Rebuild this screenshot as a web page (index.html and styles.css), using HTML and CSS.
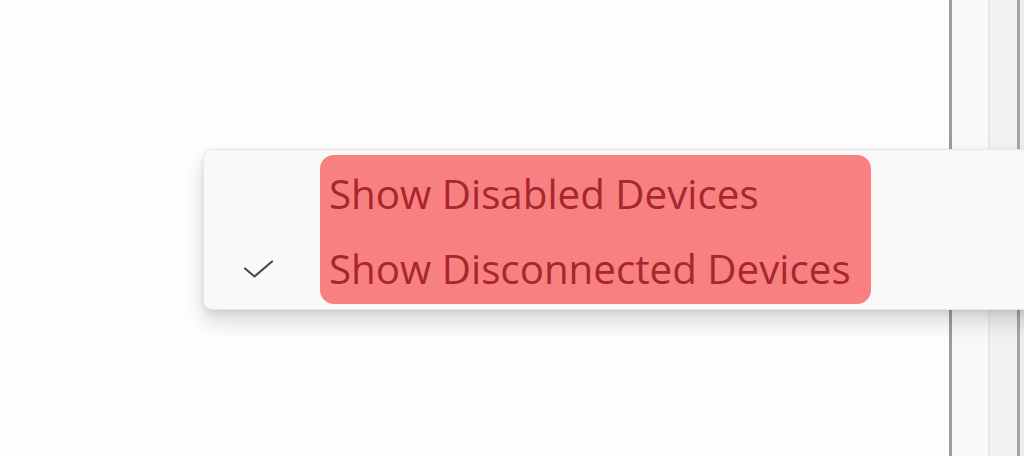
FILE: index.html
```html
<!DOCTYPE html>
<html lang="en">
<head>
<meta charset="utf-8">
<link rel="stylesheet" href="styles.css">
</head>
<body>
<div class="page">
  <div class="main"></div>
  <div class="rail">
    <div class="rail-a"></div>
    <div class="rail-b"></div>
    <div class="rail-c"></div>
  </div>
  <div class="menu">
    <div class="icons">
      <div class="icon-row"></div>
      <div class="icon-row">
        <svg class="check" width="32" height="20" viewBox="0 0 32 20"><path d="M2 9.5 L11.5 17.5 L29 2.5" fill="none" stroke="#4a4a4a" stroke-width="2.2" stroke-linecap="round" stroke-linejoin="round"/></svg>
      </div>
    </div>
    <div class="labels">
      <div class="label">Show Disabled Devices</div>
      <div class="label">Show Disconnected Devices</div>
    </div>
  </div>
</div>
</body>
</html>
```

FILE: styles.css
```css
html, body {
  margin: 0;
  padding: 0;
  background: #ffffff;
}
.page {
  position: relative;
  display: flex;
  width: 1024px;
  height: 456px;
  overflow: hidden;
  font-family: "Open Sans", "Noto Sans", sans-serif;
}
.main {
  flex: 1;
  background: #fefefe;
}
.rail {
  display: flex;
  box-sizing: border-box;
  width: 75px;
  border-left: 3px solid #9c9c9c;
  background: #f4f4f4;
}
.rail-a {
  width: 36px;
  background: #f9f9f9;
  border-right: 2px solid #e8e8e8;
}
.rail-b {
  width: 27px;
  background: #f2f2f2;
  border-right: 3px solid #a6a6a6;
}
.rail-c {
  flex: 1;
  background: #eeeeee;
}
.menu {
  position: absolute;
  left: 203px;
  top: 149px;
  right: -30px;
  height: 149px;
  padding: 5px 0;
  display: flex;
  background: #f9f9f9;
  border: 1px solid #e6e6e6;
  border-radius: 9px;
  box-shadow: 0 12px 22px rgba(0, 0, 0, 0.15), 0 3px 6px rgba(0, 0, 0, 0.08);
}
.icons {
  width: 116px;
  display: flex;
  flex-direction: column;
}
.icon-row {
  height: 74.5px;
  display: flex;
  align-items: center;
  padding-left: 39px;
}
.check {
  display: block;
  margin-top: 4px;
}
.labels {
  width: 551px;
  background: #f98080;
  border-radius: 14px;
  display: flex;
  flex-direction: column;
}
.label {
  box-sizing: border-box;
  height: 74.5px;
  display: flex;
  align-items: center;
  padding-left: 9px;
  padding-top: 3px;
  font-size: 40.3px;
  color: #a8262e;
  white-space: nowrap;
}
```
